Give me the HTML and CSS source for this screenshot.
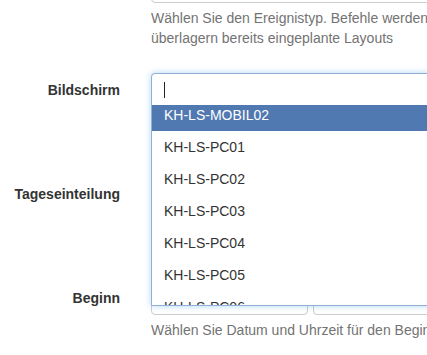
FILE: index.html
```html
<!DOCTYPE html>
<html lang="de">
<head>
<meta charset="utf-8">
<title>Ereignis</title>
<link rel="stylesheet" href="styles.css">
</head>
<body>
<form class="form">
  <div class="row row-first">
    <div class="label"></div>
    <div class="ctrl">
      <div class="input"></div>
      <p class="help">Wählen Sie den Ereignistyp. Befehle werden<br>überlagern bereits eingeplante Layouts</p>
    </div>
  </div>
  <div class="row">
    <label class="label">Bildschirm</label>
    <div class="ctrl">
      <div class="input"></div>
      <div class="help help-space"></div>
      <div class="dropdown">
        <div class="search"><span class="caret"></span></div>
        <div class="results">
          <ul class="list">
            <li class="option active">KH-LS-MOBIL02</li>
            <li class="option">KH-LS-PC01</li>
            <li class="option">KH-LS-PC02</li>
            <li class="option">KH-LS-PC03</li>
            <li class="option">KH-LS-PC04</li>
            <li class="option">KH-LS-PC05</li>
            <li class="option">KH-LS-PC06</li>
          </ul>
        </div>
      </div>
    </div>
  </div>
  <div class="row">
    <label class="label">Tageseinteilung</label>
    <div class="ctrl">
      <div class="input"></div>
      <div class="help help-space"></div>
    </div>
  </div>
  <div class="row">
    <label class="label">Beginn</label>
    <div class="ctrl">
      <div class="pair">
        <div class="input half"></div>
        <div class="input half"></div>
      </div>
      <p class="help nowrap">Wählen Sie Datum und Uhrzeit für den Beginn des Ereignisses</p>
    </div>
  </div>
</form>
</body>
</html>
```
FILE: styles.css
```css
html, body {
  margin: 0;
  padding: 0;
  background: #fff;
  overflow: hidden;
}
body {
  font-family: "Liberation Sans", Arial, sans-serif;
  font-size: 14px;
  line-height: 20px;
  color: #333;
}
.form {
  margin-top: -31px;
}
.row {
  display: grid;
  grid-template-columns: 136px 340px;
  margin-bottom: 15px;
}
.label {
  padding: 7px 16px 0 0;
  text-align: right;
  font-weight: bold;
  color: #333;
}
.ctrl {
  position: relative;
  padding-left: 15px;
}
.input {
  box-sizing: border-box;
  height: 34px;
  border: 1px solid #ccc;
  border-radius: 4px;
  background: #fff;
  box-shadow: inset 0 1px 1px rgba(0, 0, 0, 0.075);
}
.pair {
  display: flex;
  gap: 5px;
}
.half {
  width: 157px;
  flex: none;
}
.help {
  margin: 5px 0 10px;
  color: #737373;
}
.help-space {
  height: 40px;
}
.nowrap {
  white-space: nowrap;
}
.dropdown {
  position: absolute;
  z-index: 10;
  top: 0;
  left: 15px;
  width: 330px;
  height: 233px;
  box-sizing: border-box;
  border: 1px solid #90b0d8;
  border-radius: 4px 4px 0 0;
  background: #fff;
  box-shadow: 0 0 6px rgba(102, 175, 233, 0.5);
  display: flex;
  flex-direction: column;
}
.search {
  flex: none;
  height: 31px;
  box-sizing: border-box;
  padding: 8px 12px 0;
}
.caret {
  display: block;
  width: 1px;
  height: 16px;
  background: #222;
}
.results {
  flex: 1;
  overflow: hidden;
}
.list {
  list-style: none;
  margin: -6px 0 0;
  padding: 0;
}
.option {
  height: 32px;
  line-height: 32px;
  padding-left: 12px;
  color: #333;
}
.option.active {
  background: #5078b1;
  color: #fff;
}
```
